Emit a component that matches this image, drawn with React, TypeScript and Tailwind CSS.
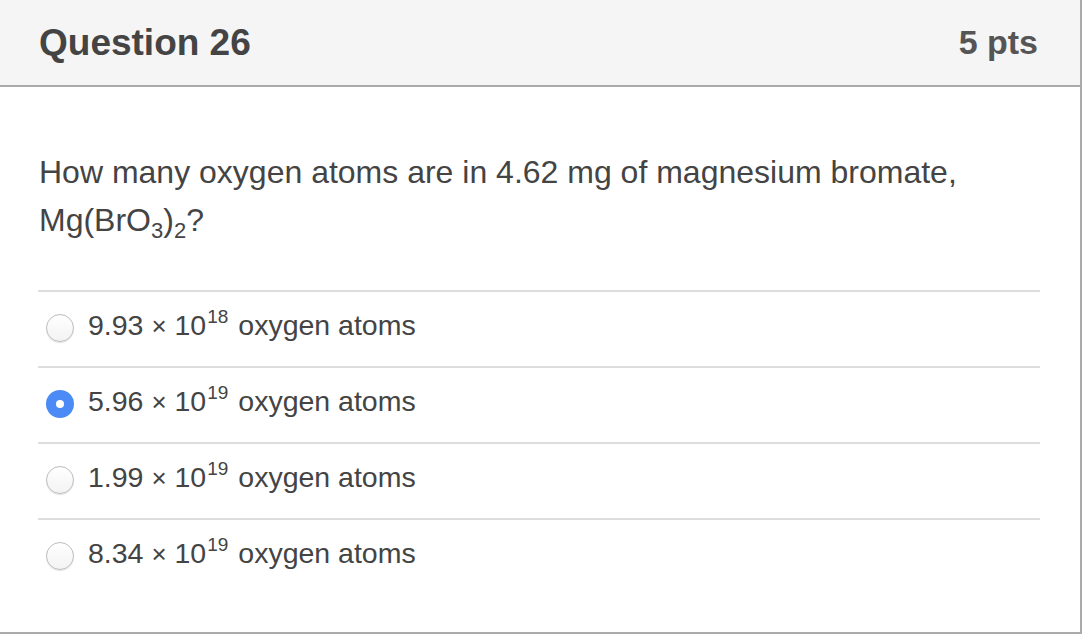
const options = [
  { coef: "9.93", exp: "18", checked: false },
  { coef: "5.96", exp: "19", checked: true },
  { coef: "1.99", exp: "19", checked: false },
  { coef: "8.34", exp: "19", checked: false },
];

function Radio({ checked }: { checked: boolean }) {
  if (checked) {
    return (
      <div className="mt-[7px] ml-[8px] w-[28px] h-[28px] shrink-0 rounded-full bg-[#4c8bf5] flex items-center justify-center">
        <div className="w-[8px] h-[8px] rounded-full bg-white"></div>
      </div>
    );
  }
  return (
    <div className="mt-[7px] ml-[8px] w-[28px] h-[28px] shrink-0 rounded-full border border-[#bdbdbd] bg-gradient-to-b from-white to-[#f3f3f3] shadow-[0_1px_1px_rgba(0,0,0,0.12)]"></div>
  );
}

export default function App() {
  return (
    <div className="w-[1082px] h-[634px] bg-white border-r-2 border-b-2 border-[#aaaaaa] font-['Liberation_Sans',Arial,sans-serif]">
      {/* Cabecera */}
      <div className="h-[87px] bg-[#f5f5f5] border-b-2 border-[#aaaaaa] flex items-center justify-between pl-[39px] pr-[42px]">
        <h2 className="text-[37px] font-bold text-[#444444]">Question 26</h2>
        <div className="text-[34px] font-bold text-[#555555]">5 pts</div>
      </div>

      <p className="mt-[61px] pl-[39px] text-[32px] leading-[48px] text-[#444444]">
        How many oxygen atoms are in 4.62 mg of magnesium bromate,
        <br />
        Mg(BrO
        <span className="relative top-[7px] text-[22px] leading-none">3</span>)
        <span className="relative top-[7px] text-[22px] leading-none">2</span>?
      </p>

      <div className="mt-[46px] ml-[38px] mr-[40px]">
        {options.map((opt, idx) => (
          <div key={idx} className="h-[76px] border-t-2 border-[#dddddd] flex items-start pt-[15px]">
            <Radio checked={opt.checked} />
            <div className="ml-[14px] text-[28.5px] leading-[36px] text-[#444444]">
              {opt.coef} <span className="text-[26px]">×</span> 10
              <span className="relative -top-[12px] ml-[1px] mr-[2px] text-[19px] leading-none">{opt.exp}</span> oxygen atoms
            </div>
          </div>
        ))}
      </div>
    </div>
  );
}
